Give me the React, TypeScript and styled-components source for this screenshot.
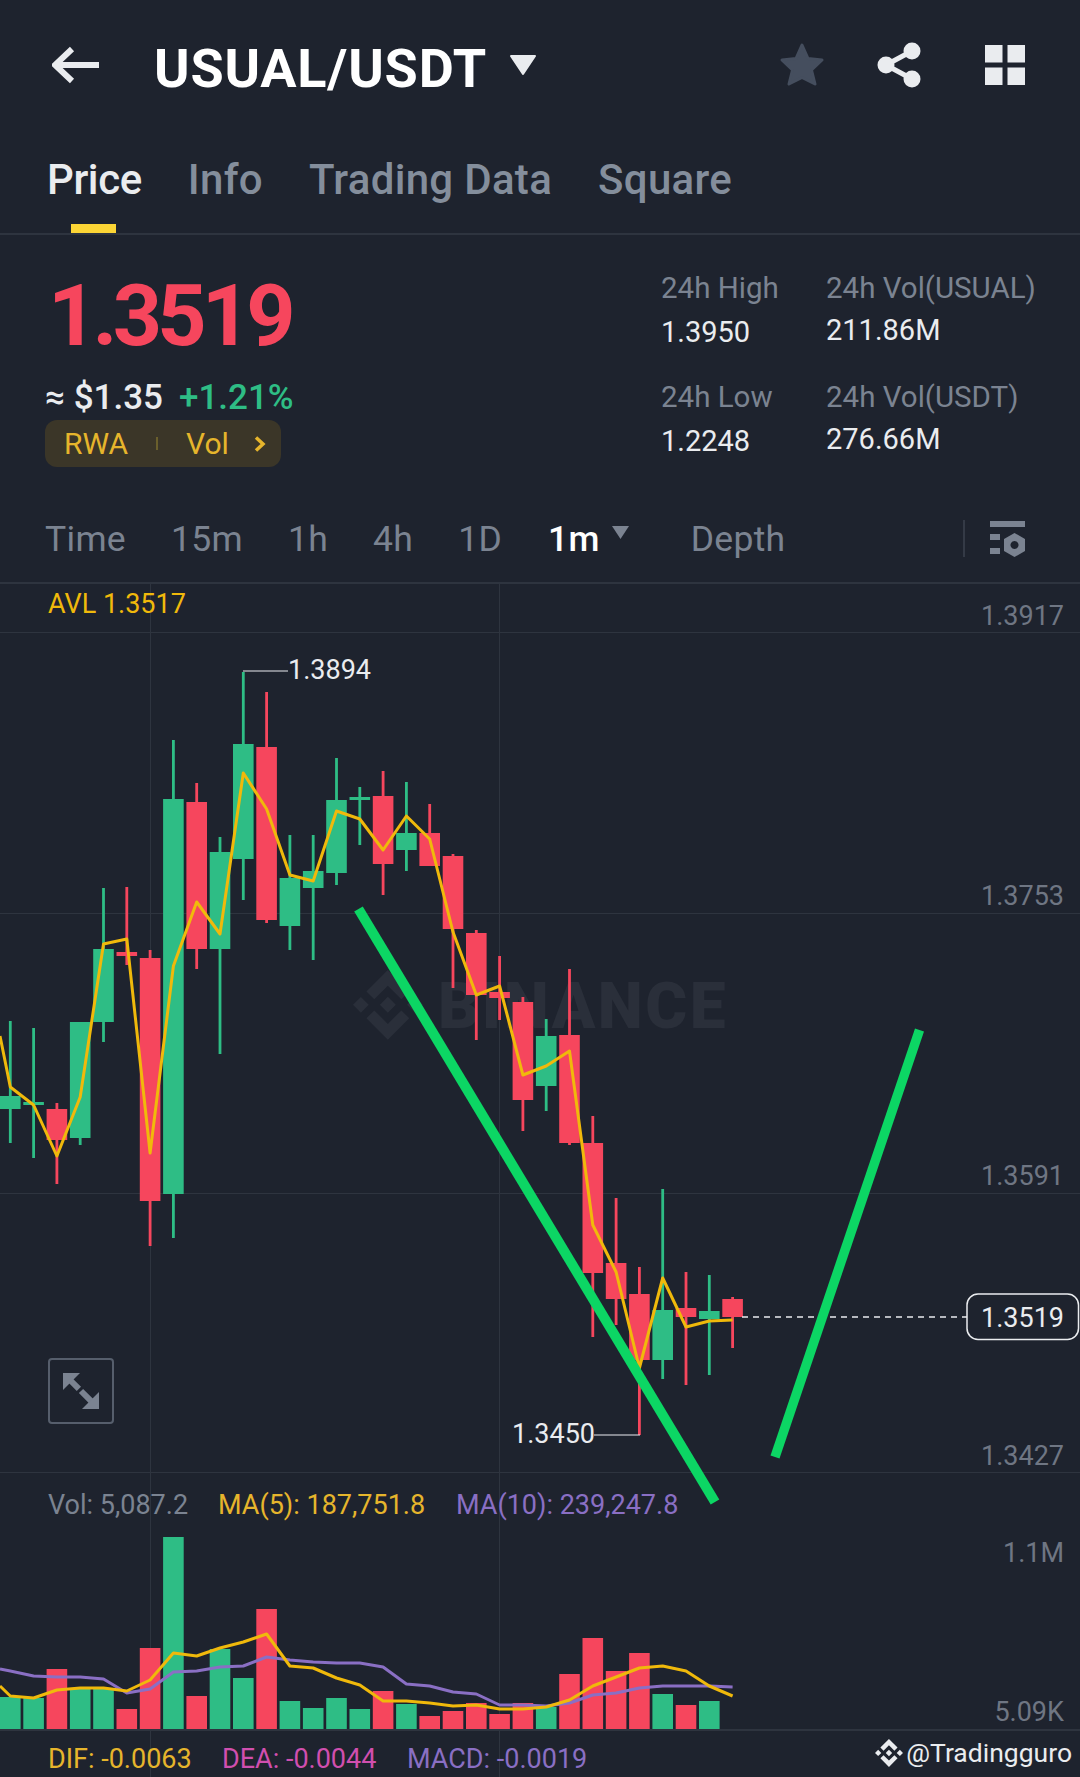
import styled, { createGlobalStyle } from "styled-components";

const GREEN = "#2EBD85";
const RED = "#F6465D";
const YELLOW = "#F0B90B";
const PURPLE = "#8A6FC4";
const GRID = "#2E343F";
const BINANCE_LOGO =
  "M38.73 53.2l24.59-24.58 24.6 24.6 14.3-14.31L63.32 0 24.43 38.9l14.3 14.3zM0 63.31l14.3-14.31 14.31 14.31-14.31 14.3L0 63.31zm38.73 10.11l24.59 24.59 24.6-24.6 14.31 14.29-38.9 38.91-38.91-38.88-.02-.02 14.33-14.29zm59.63-10.1l14.31-14.31 14.3 14.3-14.3 14.32-14.31-14.31zm-20.5-.01l-14.54-14.54-10.75 10.75-1.24 1.24-2.55 2.55 14.54 14.53 14.54-14.53z";

const STEP = 23.3;
const slotX = (i: number) => 10.3 + i * STEP;

// up, wick top, body top, body bottom, wick bottom (page pixels)
const candles: [boolean, number, number, number, number][] = [
  [true, 1021, 1096, 1109, 1143],
  [true, 1028, 1102, 1105, 1158],
  [false, 1103, 1109, 1140, 1184],
  [true, 1022, 1022, 1138, 1145],
  [true, 888, 949, 1022, 1042],
  [false, 887, 952, 956, 965],
  [false, 950, 958, 1201, 1246],
  [true, 740, 799, 1194, 1238],
  [false, 783, 802, 949, 969],
  [true, 837, 852, 949, 1054],
  [true, 672, 744, 859, 900],
  [false, 692, 747, 920, 923],
  [true, 835, 878, 926, 950],
  [true, 835, 871, 888, 960],
  [true, 758, 800, 873, 885],
  [true, 787, 797, 800, 845],
  [false, 771, 796, 864, 895],
  [true, 782, 833, 850, 871],
  [false, 804, 833, 866, 866],
  [false, 854, 856, 929, 988],
  [false, 930, 933, 995, 1040],
  [false, 956, 992, 998, 1020],
  [false, 997, 1002, 1100, 1131],
  [true, 1019, 1036, 1086, 1111],
  [false, 969, 1035, 1143, 1145],
  [false, 1116, 1143, 1273, 1337],
  [false, 1198, 1263, 1299, 1325],
  [false, 1267, 1294, 1360, 1435],
  [true, 1189, 1310, 1360, 1379],
  [false, 1272, 1308, 1317, 1385],
  [true, 1275, 1311, 1319, 1375],
  [false, 1297, 1299, 1317, 1348],
];

const priceMa = [
  1087, 1105, 1156, 1097, 944, 939, 1153, 966, 902, 934, 773, 809, 875, 881, 811, 819, 850, 816,
  839, 932, 995, 986, 1075, 1066, 1051, 1225, 1272, 1368, 1278, 1327, 1321, 1320,
];

const volumes: [boolean, number][] = [
  [true, 1698], [true, 1699], [false, 1670], [true, 1690], [true, 1690], [false, 1710],
  [false, 1649], [true, 1538], [false, 1697], [true, 1650], [true, 1679], [false, 1610],
  [true, 1702], [true, 1709], [true, 1699], [true, 1710], [false, 1692], [true, 1705],
  [false, 1717], [false, 1712], [false, 1704], [false, 1715], [false, 1704], [true, 1708],
  [false, 1675], [false, 1639], [false, 1672], [false, 1654], [true, 1695], [false, 1706],
  [true, 1702],
];

const volMa5 = [
  1697, 1699, 1691, 1689, 1689, 1692, 1681, 1654, 1657, 1649, 1643, 1635, 1667, 1669, 1679, 1686,
  1702, 1702, 1704, 1707, 1706, 1710, 1710, 1708, 1701, 1687, 1678, 1669, 1667, 1672, 1687, 1697,
];

const volMa10 = [
  1672, 1677, 1678, 1678, 1680, 1694, 1690, 1673, 1672, 1668, 1667, 1658, 1661, 1663, 1664, 1664,
  1668, 1685, 1687, 1693, 1695, 1706, 1706, 1707, 1704, 1696, 1694, 1689, 1687, 1687, 1687, 1688,
];

const toPoints = (ys: number[], start?: number) =>
  (start === undefined ? "" : `0,${start} `) + ys.map((y, i) => `${slotX(i)},${y}`).join(" ");

const GlobalStyle = createGlobalStyle`
  html, body {
    margin: 0;
    padding: 0;
    background: #1E232E;
  }
  * {
    box-sizing: border-box;
  }
`;

const Page = styled.div`
  width: 1080px;
  height: 1777px;
  overflow: hidden;
  background: #1e232e;
  color: #eaecef;
  font-family: "Roboto", "Noto Sans", sans-serif;
`;

const Header = styled.header`
  display: flex;
  align-items: center;
  height: 130px;
  padding: 0 55px 0 52px;
`;

const BackIcon = styled.svg`
  width: 48px;
  height: 40px;
  margin-right: 54px;
`;

const Title = styled.h1`
  margin: 6px 22px 0 0;
  font-size: 54px;
  font-weight: 700;
  color: #fff;
  letter-spacing: 0.8px;
`;

const TitleCaret = styled.svg`
  width: 28px;
  height: 22px;
  margin-top: 0;
`;

const HeaderIcons = styled.div`
  display: flex;
  align-items: center;
  margin-left: auto;
`;

const StarIcon = styled.svg`
  width: 46px;
  height: 46px;
  margin-right: 52px;
`;

const ShareIcon = styled.svg`
  width: 44px;
  height: 46px;
  margin-right: 64px;
`;

const GridIcon = styled.svg`
  width: 40px;
  height: 40px;
`;

const Tabs = styled.nav`
  display: flex;
  gap: 46px;
  height: 105px;
  padding: 26px 0 0 47px;
  border-bottom: 2px solid ${GRID};
`;

const Tab = styled.div<{ $active?: boolean }>`
  position: relative;
  height: 77px;
  font-size: 42px;
  line-height: 48px;
  font-weight: 500;
  letter-spacing: ${(p) => (p.$active ? "-0.4px" : "0.3px")};
  color: ${(p) => (p.$active ? "#EAECEF" : "#848E9C")};

  &::after {
    content: "";
    display: ${(p) => (p.$active ? "block" : "none")};
    position: absolute;
    left: 24px;
    bottom: 0;
    width: 45px;
    height: 9px;
    background: #fcd535;
  }
`;

const Stats = styled.section`
  display: flex;
  justify-content: space-between;
  height: 280px;
`;

const Summary = styled.div`
  padding: 36px 0 0 45px;
`;

const LastPrice = styled.div`
  height: 90px;
  padding-left: 3px;
  font-size: 86px;
  line-height: 90px;
  font-weight: 700;
  letter-spacing: -4.8px;
  color: ${RED};
`;

const SubRow = styled.div`
  display: flex;
  gap: 16px;
  height: 36px;
  margin-top: 19px;
  font-size: 35px;
  line-height: 36px;
  font-weight: 500;
`;

const Change = styled.span`
  color: ${GREEN};
`;

const TagPill = styled.div`
  display: flex;
  align-items: center;
  width: 236px;
  height: 47px;
  margin-top: 4px;
  padding-left: 19px;
  border-radius: 12px;
  background: #3b3628;
  color: #e6b52c;
  font-size: 30px;
`;

const TagDivider = styled.i`
  width: 2px;
  height: 13px;
  margin: 0 28px 0 28px;
  background: #6a5f2c;
`;

const TagChevron = styled.svg`
  width: 12px;
  height: 16px;
  margin-left: 25px;
`;

const StatGrid = styled.div`
  display: grid;
  grid-template-columns: 165px 254px;
  grid-auto-rows: 109px;
  padding-top: 33px;
`;

const StatLabel = styled.div`
  height: 40px;
  font-size: 29.5px;
  line-height: 40px;
  color: #7b8391;
`;

const StatValue = styled.div<{ $raised?: boolean }>`
  height: 40px;
  margin-top: ${(p) => (p.$raised ? "2px" : "4px")};
  font-size: 29px;
  line-height: 40px;
  color: #eaecef;
`;

const TimeBar = styled.div`
  display: flex;
  align-items: center;
  gap: 45px;
  height: 67px;
  margin-top: -10px;
  padding: 0 54px 0 45px;
  font-size: 35.5px;
  letter-spacing: 0.3px;
  color: #7b8391;
`;

const IntervalPicker = styled.div`
  display: flex;
  align-items: center;
  gap: 11px;
  margin: 0 16px 0 1px;
  color: #fff;
  font-weight: 500;
`;

const SmallCaret = styled.svg`
  width: 19px;
  height: 15px;
  margin-top: -12px;
`;

const TimeTools = styled.div`
  display: flex;
  align-items: center;
  gap: 25px;
  margin-left: auto;
`;

const ToolDivider = styled.i`
  width: 2px;
  height: 37px;
  background: #343a46;
`;

const SettingsIcon = styled.svg`
  width: 36px;
  height: 38px;
`;

const ChartFrame = styled.main`
  margin-top: 10px;
  background-image: linear-gradient(${GRID}, ${GRID}), linear-gradient(${GRID}, ${GRID});
  background-repeat: no-repeat;
  background-size: 1px 100%;
  background-position: 150px 0, 499px 0;
`;

const AvlRow = styled.div`
  height: 51px;
  padding-left: 48px;
  border-top: 2px solid ${GRID};
  border-bottom: 1px solid ${GRID};
  font-size: 27px;
  line-height: 40px;
  color: ${YELLOW};
`;

const CandlePane = styled.div`
  position: relative;
  z-index: 1;
  height: 840px;
  border-bottom: 1px solid ${GRID};
`;

const ChartSvg = styled.svg`
  display: block;
  overflow: visible;
`;

const AxisText = styled.text<{ $light?: boolean }>`
  font-family: "Roboto", "Noto Sans", sans-serif;
  font-size: 27px;
  fill: ${(p) => (p.$light ? "#EAECEF" : "#6F7683")};
`;

const Watermark = styled.text`
  font-family: "Roboto", "Noto Sans", sans-serif;
  font-size: 64px;
  font-weight: 900;
  letter-spacing: 2.5px;
  fill: #2a2f3a;
`;

const ExpandButton = styled.button`
  position: absolute;
  left: 48px;
  top: 725px;
  display: flex;
  width: 66px;
  height: 66px;
  padding: 0;
  border: 2px solid #565e6c;
  border-radius: 4px;
  background: transparent;
`;

const ExpandIcon = styled.svg`
  width: 62px;
  height: 62px;
`;

const VolumePane = styled.div`
  height: 258px;
  border-bottom: 2px solid ${GRID};
`;

const Legend = styled.div<{ $height: number; $drop?: number }>`
  display: flex;
  align-items: center;
  height: ${(p) => p.$height}px;
  padding-top: ${(p) => p.$drop ?? 0}px;
  padding-left: 48px;
  font-size: 27px;
`;

const LegendItem = styled.span<{ $color: string; $width: number }>`
  width: ${(p) => p.$width}px;
  color: ${(p) => p.$color};
`;

const BottomRow = styled.div`
  position: relative;
`;

const Credit = styled.div`
  position: absolute;
  right: 8px;
  top: 6px;
  display: flex;
  align-items: center;
  gap: 3px;
  font-size: 26.5px;
  color: #eaecef;
`;

const CreditLogo = styled.svg`
  width: 28px;
  height: 28px;
`;

const candleChart = (
  <ChartSvg width={1080} height={839} viewBox="0 633 1080 839">
    <line x1={0} x2={1080} y1={913.5} y2={913.5} stroke={GRID} strokeWidth={1} />
    <line x1={0} x2={1080} y1={1193.5} y2={1193.5} stroke={GRID} strokeWidth={1} />

    <path d={BINANCE_LOGO} transform="translate(353 970) scale(0.55)" fill="#2a2f3a" />
    <Watermark x={438} y={1028}>BINANCE</Watermark>

    {candles.map(([up, wickTop, top, bottom, wickBottom], i) => {
      const color = up ? GREEN : RED;
      const x = slotX(i);
      return (
        <g key={i} fill={color}>
          <rect x={x - 1.4} y={wickTop} width={2.8} height={wickBottom - wickTop} />
          <rect x={x - 10.3} y={top} width={20.6} height={Math.max(bottom - top, 3)} />
        </g>
      );
    })}

    <polyline points={toPoints(priceMa, 1036)} fill="none" stroke={YELLOW} strokeWidth={3} strokeLinejoin="round" />

    <polyline points="243,671 288,671" fill="none" stroke="#eaecef" strokeWidth={1.2} />
    <AxisText $light x={288} y={679}>1.3894</AxisText>
    <polyline points="594,1435 640,1435" fill="none" stroke="#eaecef" strokeWidth={1.2} />
    <AxisText $light x={512} y={1443}>1.3450</AxisText>

    <AxisText x={1064} y={625} textAnchor="end">1.3917</AxisText>
    <AxisText x={1064} y={905} textAnchor="end">1.3753</AxisText>
    <AxisText x={1064} y={1185} textAnchor="end">1.3591</AxisText>
    <AxisText x={1064} y={1465} textAnchor="end">1.3427</AxisText>

    <line x1={742} x2={967} y1={1317} y2={1317} stroke="#eaecef" strokeWidth={1.5} strokeDasharray="6 5" />
    <rect x={967} y={1294} width={111.5} height={45.5} rx={11} fill="#1e232e" stroke="#eaecef" strokeWidth={1.5} />
    <AxisText $light x={1064} y={1327} textAnchor="end">1.3519</AxisText>

    <line x1={358.5} y1={909} x2={715} y2={1502} stroke="#0CD664" strokeWidth={10} />
    <line x1={775} y1={1457} x2={919.5} y2={1030} stroke="#0CD664" strokeWidth={9.5} />
  </ChartSvg>
);

const volumeChart = (
  <ChartSvg width={1080} height={192} viewBox="0 1538 1080 192">
    {volumes.map(([up, top], i) => (
      <rect key={i} x={slotX(i) - 10.3} y={top} width={20.6} height={1730 - top} fill={up ? GREEN : RED} />
    ))}
    <polyline points={toPoints(volMa10, 1670)} fill="none" stroke={PURPLE} strokeWidth={3} strokeLinejoin="round" />
    <polyline points={toPoints(volMa5, 1687)} fill="none" stroke={YELLOW} strokeWidth={3} strokeLinejoin="round" />
    <AxisText x={1064} y={1563} textAnchor="end">1.1M</AxisText>
    <AxisText x={1064} y={1722} textAnchor="end">5.09K</AxisText>
  </ChartSvg>
);

export default function App() {
  return (
    <Page>
      <GlobalStyle />
      <Header>
        <BackIcon viewBox="0 0 48 40">
          <path d="M20 4 L3 20 L20 36 M3 20 H47" fill="none" stroke="#EAECEF" strokeWidth={6} />
        </BackIcon>
        <Title>USUAL/USDT</Title>
        <TitleCaret viewBox="0 0 28 22">
          <path d="M2 2 H26 L14 20 Z" fill="#EAECEF" stroke="#EAECEF" strokeWidth={2} strokeLinejoin="round" />
        </TitleCaret>
        <HeaderIcons>
          <StarIcon viewBox="0 0 46 46">
            <path
              d="M23 3 L29 16.5 L43 18 L32.5 28 L36 42 L23 35.5 L10 42 L13.5 28 L3 18 L17 16.5 Z"
              fill="#454E5E"
              stroke="#454E5E"
              strokeWidth={3}
              strokeLinejoin="round"
            />
          </StarIcon>
          <ShareIcon viewBox="0 0 44 46">
            <path d="M9 23 L35 9 M9 23 L35 37" stroke="#EAECEF" strokeWidth={5} />
            <circle cx={9} cy={23} r={8.5} fill="#EAECEF" />
            <circle cx={35} cy={9} r={8.5} fill="#EAECEF" />
            <circle cx={35} cy={37} r={8.5} fill="#EAECEF" />
          </ShareIcon>
          <GridIcon viewBox="0 0 40 40">
            <path d="M0 0 H17.5 V17.5 H0 Z M22.5 0 H40 V17.5 H22.5 Z M0 22.5 H17.5 V40 H0 Z M22.5 22.5 H40 V40 H22.5 Z" fill="#EAECEF" />
          </GridIcon>
        </HeaderIcons>
      </Header>

      <Tabs>
        <Tab $active>Price</Tab>
        <Tab>Info</Tab>
        <Tab>Trading Data</Tab>
        <Tab>Square</Tab>
      </Tabs>

      <Stats>
        <Summary>
          <LastPrice>1.3519</LastPrice>
          <SubRow>
            <span>≈ $1.35</span>
            <Change>+1.21%</Change>
          </SubRow>
          <TagPill>
            RWA
            <TagDivider />
            Vol
            <TagChevron viewBox="0 0 12 16">
              <path d="M2 1.5 L9 8 L2 14.5" fill="none" stroke="#E6B52C" strokeWidth={3.5} />
            </TagChevron>
          </TagPill>
        </Summary>
        <StatGrid>
          <div>
            <StatLabel>24h High</StatLabel>
            <StatValue>1.3950</StatValue>
          </div>
          <div>
            <StatLabel>24h Vol(USUAL)</StatLabel>
            <StatValue $raised>211.86M</StatValue>
          </div>
          <div>
            <StatLabel>24h Low</StatLabel>
            <StatValue>1.2248</StatValue>
          </div>
          <div>
            <StatLabel>24h Vol(USDT)</StatLabel>
            <StatValue $raised>276.66M</StatValue>
          </div>
        </StatGrid>
      </Stats>

      <TimeBar>
        <span>Time</span>
        <span>15m</span>
        <span>1h</span>
        <span>4h</span>
        <span>1D</span>
        <IntervalPicker>
          1m
          <SmallCaret viewBox="0 0 19 15">
            <path d="M1 1 H18 L9.5 14 Z" fill="#7B8391" />
          </SmallCaret>
        </IntervalPicker>
        <span>Depth</span>
        <TimeTools>
          <ToolDivider />
          <SettingsIcon viewBox="0 0 36 38">
            <g fill="#7B8391">
              <rect x={0} y={1} width={35} height={6} />
              <rect x={0} y={14} width={10} height={6} />
              <rect x={0} y={28} width={10} height={6} />
              <path
                fillRule="evenodd"
                d="M24.5 13 L35 19 V31 L24.5 37 L14 31 V19 Z M24.5 21 a4 4 0 1 0 0.01 0 Z"
              />
            </g>
          </SettingsIcon>
        </TimeTools>
      </TimeBar>

      <ChartFrame>
        <AvlRow>AVL 1.3517</AvlRow>
        <CandlePane>
          {candleChart}
          <ExpandButton aria-label="Expand">
            <ExpandIcon viewBox="0 0 62 62">
              <g fill="#7B8391">
                <path d="M13 13 H30 L13 30 Z" />
                <path d="M49 49 H32 L49 32 Z" />
              </g>
              <path d="M19 19 L31 31 M31 31 L43 43" stroke="#7B8391" strokeWidth={6} strokeDasharray="14 4 14" />
            </ExpandIcon>
          </ExpandButton>
        </CandlePane>
        <VolumePane>
          <Legend $height={64}>
            <LegendItem $color="#7B8391" $width={170}>Vol: 5,087.2</LegendItem>
            <LegendItem $color="#E6B52C" $width={238}>MA(5): 187,751.8</LegendItem>
            <LegendItem $color={PURPLE} $width={300}>MA(10): 239,247.8</LegendItem>
          </Legend>
          {volumeChart}
        </VolumePane>
        <BottomRow>
          <Legend $height={46} $drop={9}>
            <LegendItem $color="#E6B52C" $width={174}>DIF: -0.0063</LegendItem>
            <LegendItem $color="#D14FAF" $width={185}>DEA: -0.0044</LegendItem>
            <LegendItem $color={PURPLE} $width={240}>MACD: -0.0019</LegendItem>
          </Legend>
          <Credit>
            <CreditLogo viewBox="0 0 127 127">
              <path d={BINANCE_LOGO} fill="#EAECEF" />
            </CreditLogo>
            @Tradingguro
          </Credit>
        </BottomRow>
      </ChartFrame>
    </Page>
  );
}
